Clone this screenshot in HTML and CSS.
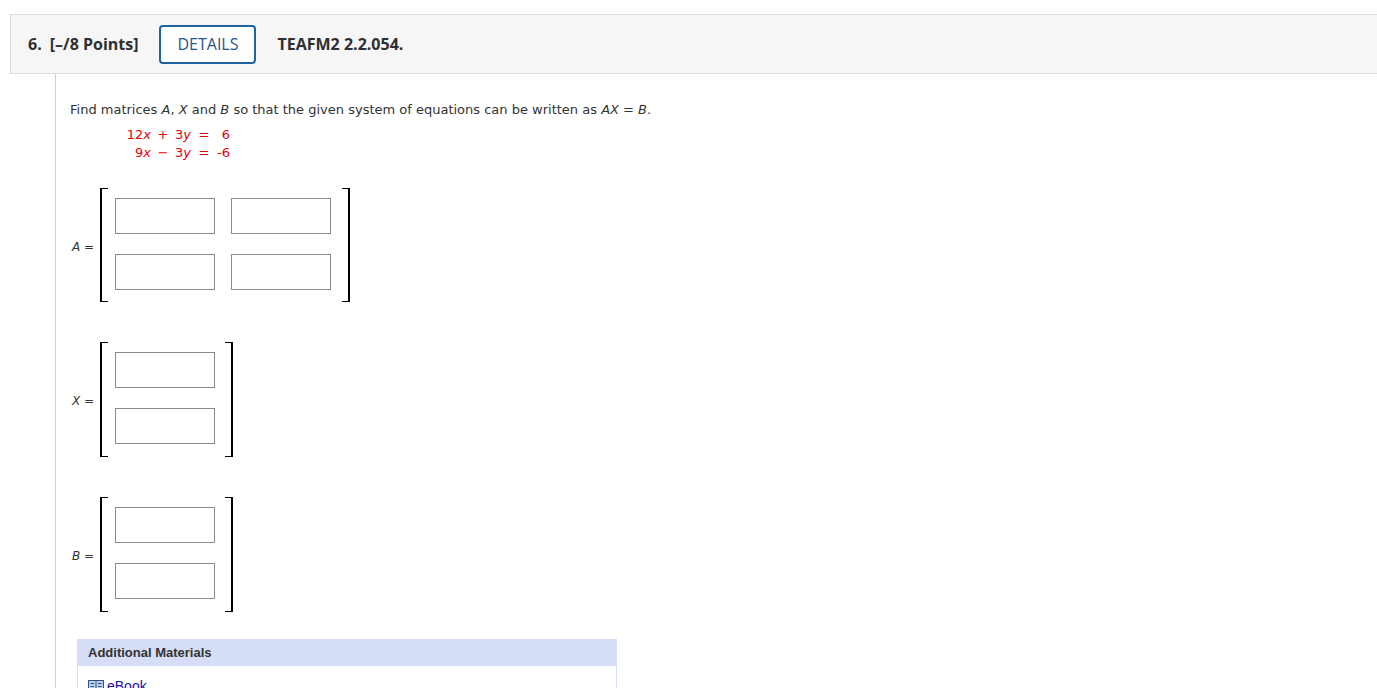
FILE: index.html
```html
<!DOCTYPE html>
<html>
<head>
<meta charset="utf-8">
<link rel="stylesheet" href="styles.css">
</head>
<body>
<div class="qhead">
  <span class="qnum">6.</span>
  <span class="pts">[–/8 Points]</span>
  <button class="details">DETAILS</button>
  <span class="code">TEAFM2 2.2.054.</span>
</div>
<div class="qbody">
  <p class="prompt">Find matrices <i>A</i>, <i>X</i> and <i>B</i> so that the given system of equations can be written as <i>AX</i> = <i>B</i>.</p>
  <div class="eqs">
    <span>12<i>x</i></span><span>+</span><span>3<i>y</i></span><span>=</span><span>6</span>
    <span>9<i>x</i></span><span>−</span><span>3<i>y</i></span><span>=</span><span>-6</span>
  </div>

  <div class="mrow">
    <span class="mlabel"><i>A</i> =</span>
    <div class="br left"></div>
    <div class="cells two">
      <input class="cell" type="text"><input class="cell" type="text">
      <input class="cell" type="text"><input class="cell" type="text">
    </div>
    <div class="br right"></div>
  </div>

  <div class="mrow">
    <span class="mlabel"><i>X</i> =</span>
    <div class="br left"></div>
    <div class="cells one">
      <input class="cell" type="text">
      <input class="cell" type="text">
    </div>
    <div class="br right"></div>
  </div>

  <div class="mrow">
    <span class="mlabel"><i>B</i> =</span>
    <div class="br left"></div>
    <div class="cells one">
      <input class="cell" type="text">
      <input class="cell" type="text">
    </div>
    <div class="br right"></div>
  </div>

  <div class="addl">
    <div class="addl-head">Additional Materials</div>
    <div class="addl-body">
      <a class="ebook" href="#"><svg class="bookicon" width="16" height="13" viewBox="0 0 16 13"><rect x="0.5" y="0.5" width="15" height="12" fill="#bcd0ea" stroke="#2d4f86"/><line x1="8" y1="0.5" x2="8" y2="12.5" stroke="#2d4f86"/><line x1="2.5" y1="3.5" x2="6" y2="3.5" stroke="#2d4f86"/><line x1="10" y1="3.5" x2="13.5" y2="3.5" stroke="#2d4f86"/><line x1="2.5" y1="6.5" x2="6" y2="6.5" stroke="#2d4f86"/><line x1="10" y1="6.5" x2="13.5" y2="6.5" stroke="#2d4f86"/></svg>eBook</a>
    </div>
  </div>
</div>
</body>
</html>
```

FILE: styles.css
```css
html, body {
  margin: 0;
  padding: 0;
  background: #fff;
  overflow: hidden;
}
body {
  font-family: "DejaVu Sans", Verdana, sans-serif;
  color: #333;
}
.qhead {
  margin: 14px 0 0 10px;
  height: 58px;
  border: 1px solid #dcdcdc;
  border-right: none;
  background: #f6f6f6;
  display: flex;
  align-items: center;
  font-family: "Open Sans", sans-serif;
  font-size: 16px;
  font-weight: 700;
  color: #2f2f2f;
  padding-left: 17px;
}
.qnum {
  margin-right: 8px;
}
.pts {
  margin-right: 21px;
}
.details {
  width: 97px;
  height: 39px;
  border: 2px solid #1d64a0;
  border-radius: 4px;
  background: #fff;
  color: #1f5590;
  font-family: "Open Sans", sans-serif;
  font-size: 16px;
  font-weight: 500;
  padding: 0;
  margin-right: 21px;
}
.code {
  color: #2f2f2f;
}
.qbody {
  margin-left: 55px;
  border-left: 1px solid #cfcfcf;
  padding: 27px 0 0 14px;
  height: 700px;
}
.prompt {
  margin: 0;
  font-size: 13px;
  line-height: 18px;
}
.eqs {
  display: grid;
  grid-template-columns: 81px 24px 16px 26px 13px;
  font-size: 13px;
  line-height: 18px;
  color: #e8000c;
  margin-top: 7px;
  justify-items: end;
}
.eqs span:nth-child(5n+2),
.eqs span:nth-child(5n+4) {
  justify-self: center;
}
.mrow {
  display: flex;
  align-items: center;
  margin-top: 26px;
}
.mrow + .mrow {
  margin-top: 40px;
}
.mlabel {
  width: 30px;
  font-size: 12px;
  padding: 3px 0 0 2px;
  box-sizing: border-box;
}
.br {
  width: 8px;
  align-self: stretch;
  box-sizing: border-box;
  border-top: 1px solid #000;
  border-bottom: 1px solid #000;
}
.br.left {
  border-left: 2px solid #000;
}
.br.right {
  border-right: 2px solid #000;
}
.cells {
  display: grid;
  row-gap: 20px;
  column-gap: 16px;
  padding: 10px 11px 12px 7px;
}
.cells.two {
  grid-template-columns: 100px 100px;
}
.cells.one {
  grid-template-columns: 100px;
  padding: 10px 10px 13px 7px;
}
.cell {
  width: 100px;
  height: 36px;
  box-sizing: border-box;
  border: 1px solid #8a8a8a;
  background: #fff;
  margin: 0;
  padding: 0;
}
.addl {
  width: 540px;
  margin: 27px 0 0 7px;
  font-family: "Liberation Sans", Arial, sans-serif;
}
.addl-head {
  height: 27px;
  background: #d6ddf6;
  font-size: 13px;
  font-weight: 700;
  color: #333;
  line-height: 27px;
  padding-left: 11px;
}
.addl-body {
  border-left: 1px solid #d6ddf6;
  border-right: 1px solid #d6ddf6;
  padding: 12px 10px;
  height: 60px;
}
.ebook {
  color: #1a0dab;
  font-size: 14px;
  text-decoration: none;
  display: flex;
  align-items: center;
  gap: 3px;
}
.bookicon {
  display: block;
}
```
